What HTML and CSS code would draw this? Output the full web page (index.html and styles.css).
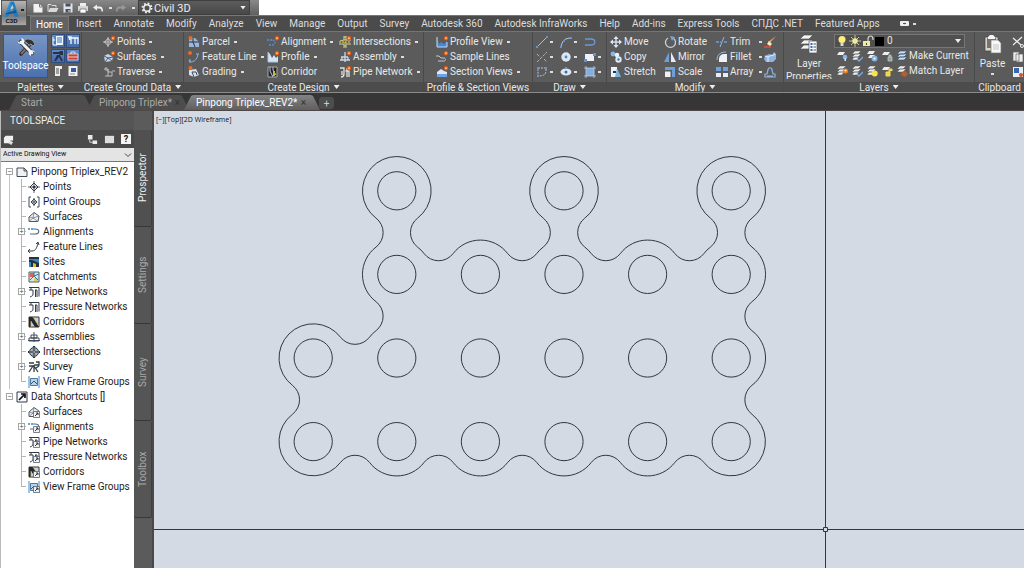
FILE: index.html
```html
<!DOCTYPE html>
<html lang="en">
<head>
<meta charset="utf-8">
<title>Civil 3D - Pinpong Triplex_REV2</title>
<link rel="stylesheet" href="styles.css">
</head>
<body>
<svg class="sprite" aria-hidden="true">
  <defs>
    <linearGradient id="logo-blue" x1="0" y1="0" x2="1" y2="1"><stop offset="0" stop-color="#4fb4ea"/><stop offset="1" stop-color="#0c5ea8"/></linearGradient>
    <g id="spark"><circle cx="10" cy="2.2" r="2.2" fill="#e8581c"/><circle cx="10" cy="2.2" r="1" fill="#ffc56b"/></g>
    <symbol id="new" viewBox="0 0 12 12"><path d="M1.500 2h6l3 3v5.500h-9z" fill="#f2f2f2"/><path d="M7.500 2v3h3" fill="none" stroke="#777"/></symbol>
    <symbol id="open" viewBox="0 0 12 12"><path d="M1 9.500v-7h3l1 1h4v2" fill="none" stroke="#ddd"/><path d="M1 10l2-4h8.500l-2 4z" fill="#d8d8d8"/></symbol>
    <symbol id="save" viewBox="0 0 12 12"><path d="M1.500 1.500h9v9h-9z" fill="#dfe3e8"/><path d="M3.500 1.500h5v3h-5zM3.500 7h5v3.500h-5z" fill="#47515f"/><path d="M6.500 8h1v2h-1z" fill="#eee"/></symbol>
    <symbol id="print" viewBox="0 0 12 12"><path d="M3 1h6v3H3z" fill="#eee"/><path d="M1 4h10v5H1z" fill="#d5d5d5"/><path d="M3 7h6v4H3z" fill="#fff" stroke="#666" stroke-width=".7"/></symbol>
    <symbol id="undo" viewBox="0 0 12 12"><path d="M1 5.500l4-3v2h3c2 0 3 1.500 3 5h-1.500c0-2-.5-3-2-3H5v2z" fill="currentColor"/></symbol>
    <symbol id="gear" viewBox="0 0 12 12"><circle cx="6" cy="6" r="4.500" fill="none" stroke="#eee" stroke-width="2" stroke-dasharray="1.800 1.730"/><circle cx="6" cy="6" r="3.200" fill="none" stroke="#eee" stroke-width="1.400"/></symbol>
    <symbol id="tools" viewBox="0 0 20 20"><path d="M5 17L15 6" stroke="#2a211e" stroke-width="3.400" stroke-linecap="round"/><path d="M5 17L15 6" stroke="#9a6a58" stroke-width="2"/><path d="M8 4c3-3 7-2 9 0l2 3-2 2-2-2-2 1-2-2z" fill="#333" stroke="#9aa" stroke-width=".8"/><path d="M5 5l11 11" stroke="#1c2432" stroke-width="4.500" stroke-linecap="round"/><path d="M5 5l11 11" stroke="#f1f1f1" stroke-width="3" stroke-linecap="round"/><path d="M1.500 4.500A4 4 0 0 0 8 6 4 4 0 0 0 5.500 1v3L4 5.500zM19 15.500a4 4 0 0 0-6-1.500 4 4 0 0 0 2 5v-3l1.500-1.500z" fill="#f4f4f4"/></symbol>
    <symbol id="pal1" viewBox="0 0 12 12"><path d="M4 1h7v9H4z" fill="#eef4fb"/><path d="M5 3h5M5 5h5M5 7h5" stroke="#3777c4"/><path d="M1 2v8h4M1 5h2" stroke="#fff" fill="none"/></symbol>
    <symbol id="pal2" viewBox="0 0 12 12"><path d="M1 2h3v7M4 3h4v6M8 3h3v6M2.500 2v3" stroke="#f4f7fc" fill="none" stroke-width="1.300"/></symbol>
    <symbol id="pal3" viewBox="0 0 12 12"><path d="M1 2h6l1-1h3v4H8L7 4H1zM5 5h3l3 6H9L7 7l-3 4H2z" fill="#283246"/></symbol>
    <symbol id="pal4" viewBox="0 0 12 12"><path d="M4 4V2h4v2" stroke="#ddd" fill="none"/><path d="M1 4h10v6H1z" fill="#c9413a" stroke="#eee" stroke-width=".7"/><path d="M1 7h10" stroke="#f2d7d2"/></symbol>
    <symbol id="pal5" viewBox="0 0 12 12"><path d="M3 1h7v3H8v7H3z" fill="#ececec"/><path d="M4 4h3M4 6h3M4 8h3" stroke="#555"/></symbol>
    <symbol id="pal6" viewBox="0 0 12 12"><path d="M1.500 1h9v10h-9z" fill="#f1f1f1"/><path d="M4 3h5v4H4z" fill="#325ea8"/><path d="M3 9h5" stroke="#888"/></symbol>
    <symbol id="points" viewBox="0 0 12 12"><path d="M5 2.500L8.500 6 5 9.500 1.500 6z" fill="none" stroke="#ddd"/><path d="M5 1v10M0 6h10" stroke="#ddd" stroke-width=".8"/><use href="#spark"/></symbol>
    <symbol id="surfaces" viewBox="0 0 12 12"><path d="M1 5l4-2 5 3-1 4-7 1z" fill="#c5d6ea"/><path d="M1 5l4 2 5-1M5 7l-3 4M5 7l4 3" fill="none" stroke="#49576b"/><use href="#spark"/></symbol>
    <symbol id="traverse" viewBox="0 0 12 12"><path d="M1 3h4v3h4v4H5V3M3 1v4M9 5h3M5 10H2" fill="none" stroke="#bdbdbd"/></symbol>
    <symbol id="parcel" viewBox="0 0 12 12"><path d="M1 2h6l4 4v5H1z" fill="#9cb6d8"/><path d="M1 6h4V2M5 6l2 5M5 6h6" fill="none" stroke="#26344b"/><circle cx="2.500" cy="2" r="2" fill="#ea6a25"/></symbol>
    <symbol id="feature" viewBox="0 0 12 12"><path d="M1 9l1 2c4 0 7-2 8-8M8 3h3M2 8v4" fill="none" stroke="#8fb1d8"/><circle cx="2" cy="2" r="2" fill="#ea6a25"/></symbol>
    <symbol id="grading" viewBox="0 0 12 12"><path d="M1 4l7-1 3 6-5 2-5-2z" fill="#d9e0e9"/><path d="M4 6l4 0 1 3M4 6l2 5" fill="none" stroke="#3c4c60"/><circle cx="2.500" cy="2" r="2" fill="#ea6a25"/></symbol>
    <symbol id="alignment" viewBox="0 0 12 12"><path d="M0 4h5M2 9h3c4 0 4-5 0-5" fill="none" stroke="#5a91d0" stroke-width="1.300" stroke-dasharray="2 1"/><use href="#spark"/></symbol>
    <symbol id="profile" viewBox="0 0 12 12"><path d="M1 1v10h10V5L9 7 7 4 5 7 3 3z" fill="#d6e3f3"/><path d="M1 1v10h10" fill="none" stroke="#a8c2e2"/><use href="#spark"/></symbol>
    <symbol id="profview" viewBox="0 0 12 12"><path d="M1 1v10h10V5L8 8 5 6 3 8z" fill="#4b88d2"/><path d="M1 1v10h10V6" fill="none" stroke="#bfd8f5"/><use href="#spark"/></symbol>
    <symbol id="corridor" viewBox="0 0 12 12"><path d="M1 1h9v10H1z" fill="#24262a" stroke="#a9a9a9"/><path d="M3 1v4l3 6M6 1v3l3 5" fill="none" stroke="#b5c4dc"/><path d="M7 5v5" stroke="#d9b43a" stroke-width="2"/></symbol>
    <symbol id="intersect" viewBox="0 0 12 12"><path d="M5 0v4L1 5M7 0v4h5M5 12V8H0M7 12V8h5" fill="none" stroke="#cfd0a2"/><path d="M6 0v12M0 6h12" stroke="#e5da3c" stroke-dasharray="2 1"/><use href="#spark"/></symbol>
    <symbol id="assembly" viewBox="0 0 12 12"><path d="M6 1v10M1 9h10M2 6h7M3 6v3M9 6v3" fill="none" stroke="#c8d8ed" stroke-width="1.300"/><use href="#spark"/></symbol>
    <symbol id="pipe" viewBox="0 0 12 12"><path d="M1 2h4v6c0 2-1 3-3 3M3 5v4M8 2v9M6.500 5h4M10 5v6" fill="none" stroke="#e1e1e1" stroke-width="1.300"/><use href="#spark"/></symbol>
    <symbol id="sample" viewBox="0 0 12 12"><path d="M0 5h3l2 2h3M2 10h6c2 0 2-3 0-3" fill="none" stroke="#c4cad2"/><use href="#spark"/></symbol>
    <symbol id="section" viewBox="0 0 12 12"><path d="M1 6l4-3 3 2 3 1v5H1z" fill="#dce8f7"/><path d="M1 8h10v3H1z" fill="#6fa3e0"/><use href="#spark"/></symbol>
    <symbol id="line" viewBox="0 0 12 12"><path d="M1 11L11 1" stroke="#b6bcc6"/><path d="M0 10h2v2H0zM10 0h2v2h-2z" fill="#5d93d8"/></symbol>
    <symbol id="arc" viewBox="0 0 12 12"><path d="M1 11C2 5 5 2 11 2" fill="none" stroke="#c2cad4"/><path d="M0 10h2v2H0zM3 4h2v2H3zM10 1h2v2h-2z" fill="#5d93d8"/></symbol>
    <symbol id="pline" viewBox="0 0 12 12"><path d="M1 3h6c5 0 5 6 0 6H1" fill="none" stroke="#6c9bd4" stroke-width="1.300"/></symbol>
    <symbol id="xline" viewBox="0 0 12 12"><path d="M1 11L11 1M1 3l3 3M8 8l3 3" stroke="#a8b3c2" stroke-dasharray="3 1"/></symbol>
    <symbol id="circle" viewBox="0 0 12 12"><circle cx="6" cy="6" r="4.700" fill="#dde6f1"/><circle cx="6" cy="6" r="1.400" fill="#4c86ce"/></symbol>
    <symbol id="rect" viewBox="0 0 12 12"><path d="M1 3h9v7H1z" fill="#eef1f5"/><path d="M9 2h3v3H9zM0 8h3v3H0z" fill="#5b93da"/></symbol>
    <symbol id="curve" viewBox="0 0 12 12"><path d="M2 2h8v3c0 4-3 5-8 5z" fill="none" stroke="#b9c3d0" stroke-dasharray="2 1"/><path d="M1 1h2v2H1zM9 1h2v2H9zM1 9h2v2H1z" fill="#6794cd"/></symbol>
    <symbol id="ellipse" viewBox="0 0 12 12"><ellipse cx="6" cy="6" rx="5.500" ry="3.500" fill="#dfe7f1"/><circle cx="6" cy="6" r="1.500" fill="#3e6fae"/><path d="M5 1h2v2H5z" fill="#5d93d8"/></symbol>
    <symbol id="hatch" viewBox="0 0 12 12"><path d="M2 2h8v8H2z" fill="#86ade0"/><path d="M2 0v12M10 0v12M0 2h12M0 10h12" stroke="#b9d0ee" stroke-width=".8"/></symbol>
    <symbol id="move" viewBox="0 0 12 12"><path d="M6 0l2.500 3h-5zM6 12L3.500 9h5zM0 6l3-2.500v5zM12 6L9 3.500v5z" fill="#e9eef5"/><path d="M6 2v8M2 6h8" stroke="#cfdbea" stroke-width="1.500"/></symbol>
    <symbol id="copy" viewBox="0 0 12 12"><circle cx="3" cy="3" r="2.400" fill="#8ab5ea"/><circle cx="7" cy="4" r="2.300" fill="#edf1f6"/><circle cx="8.500" cy="8.500" r="3.200" fill="#e3e9f1"/><circle cx="8.500" cy="8.500" r="1.200" fill="#4a7cb8"/></symbol>
    <symbol id="stretch" viewBox="0 0 12 12"><path d="M1 1h6v10H1z" fill="#eef3fa"/><path d="M7 2l4 9H5z" fill="#79b3dd"/><path d="M3 6h3" stroke="#253246" stroke-width="2"/></symbol>
    <symbol id="rotate" viewBox="0 0 12 12"><path d="M4 2a5 5 0 1 0 5 0" fill="none" stroke="#cbd1d9" stroke-width="1.300"/><path d="M6 0l5 1-3 4z" fill="#74a5e0"/></symbol>
    <symbol id="mirror" viewBox="0 0 12 12"><path d="M5 1v10H0z" fill="#6f9fd8"/><path d="M7 1v10h5z" fill="#e4ebf4"/></symbol>
    <symbol id="scale" viewBox="0 0 12 12"><path d="M1 1h10v10H8V4H1z" fill="#6e9edb"/><path d="M1 5.500h5.500V11H1z" fill="#edf2f8"/></symbol>
    <symbol id="trim" viewBox="0 0 12 12"><path d="M0 6h5M8 6h4" stroke="#6b9edb" stroke-width="1.500" stroke-dasharray="3 1"/><path d="M4 11L8 1" stroke="#9fb4ce"/></symbol>
    <symbol id="fillet" viewBox="0 0 12 12"><path d="M3 11V8c0-3 2-5 6-5h2v8z" fill="#eff1f4"/><path d="M1 9c0-5 3-8 9-8" fill="none" stroke="#95bce9"/></symbol>
    <symbol id="array" viewBox="0 0 12 12"><path d="M0 1h5v4H0zM7 1h5v4H7z" fill="#6f9fdc"/><path d="M0 7h5v4H0zM7 7h5v4H7z" fill="#e7edf5"/></symbol>
    <symbol id="erase" viewBox="0 0 12 12"><path d="M12 0L6 7 4 6z" fill="#f2a038"/><path d="M5 5l3 3-2 2-3-2z" fill="#f4e9d2"/><path d="M0 11h7" stroke="#ea4d2e" stroke-width="1.500"/></symbol>
    <symbol id="explode" viewBox="0 0 12 12"><path d="M1 5l4-2 3 1 2-3 2 2v5l-3 3H2L0 8z" fill="#8bb4e4"/><path d="M1 5l3 1 4-2M4 6v5M8 5l3-2" fill="none" stroke="#e4edf8"/></symbol>
    <symbol id="offset" viewBox="0 0 12 12"><path d="M1 11V8h2l1-4c0-3 4-3 4 0l1 4h2v3zM3 10h6" fill="none" stroke="#8fb4e1" stroke-width="1.200"/></symbol>
    <symbol id="layerprops" viewBox="0 0 20 20"><path d="M5 1h9l-4 4H1zM5 6h9l-4 4H1zM5 11h7l-2 4H1z" fill="#f3f3f3" stroke="#555" stroke-width=".7"/><path d="M10 7h8v12h-8z" fill="#f6f7f9" stroke="#555" stroke-width=".7"/><path d="M11.500 9h2v2h-2zM11.500 12h2v2h-2zM11.500 15h2v2h-2z" fill="#356fb8"/><path d="M14.500 10h2.500M14.500 13h2.500M14.500 16h2.500" stroke="#555"/></symbol>
    <symbol id="bulb" viewBox="0 0 12 12"><circle cx="6" cy="4.500" r="3.500" fill="#ffef76"/><path d="M4.500 7.500h3V11h-3z" fill="#d8d8d0"/></symbol>
    <symbol id="sun" viewBox="0 0 12 12"><circle cx="6" cy="6" r="2.700" fill="#fff3a1"/><path d="M6 0v12M0 6h12M2 2l8 8M10 2l-8 8" stroke="#e9e6a0" stroke-width=".8"/></symbol>
    <symbol id="unlock" viewBox="0 0 12 12"><path d="M6 6V4c0-4 5-4 5 0v1" fill="none" stroke="#d8d8c8" stroke-width="1.200"/><path d="M1 6h7v5H1z" fill="#f1e8a2"/><path d="M4 8h1v2H4z" fill="#4b4730"/></symbol>
    <symbol id="lay-a" viewBox="0 0 12 12"><path d="M3 2h6L7 5H1z" fill="#f0f0f0"/><circle cx="9" cy="7" r="2.300" fill="#8cb7e8"/><path d="M8.500 8h1.500v3H8.500z" fill="#d9e5f3"/></symbol>
    <symbol id="lay-b" viewBox="0 0 12 12"><path d="M4 1h6L7 4H1zM4 4h6L7 7H1zM3 7h5l-2 3H1z" fill="#eee" stroke="#555" stroke-width=".5"/><path d="M6 9l2 2 4-4" stroke="#78a9e2" fill="none" stroke-width="1.400"/></symbol>
    <symbol id="lay-c" viewBox="0 0 12 12"><path d="M3 1h6L7 4H1zM4 5h5L7 8H2z" fill="#eee"/><circle cx="8.500" cy="8.500" r="3" fill="#84b2e6"/><circle cx="8.500" cy="8.500" r="1" fill="#fff"/></symbol>
    <symbol id="lay-d" viewBox="0 0 12 12"><path d="M3 2h6L7 5H1z" fill="#eee"/><path d="M7 7h4v4H7zM8 7V5h2v2" fill="#8ba39c" stroke="#c8d1ce" stroke-width=".7"/></symbol>
    <symbol id="lay-e" viewBox="0 0 12 12"><path d="M4 1h7L8 4H1zM4 4h7L8 7H1zM4 7h7l-3 3H1z" fill="#cfe0f5" stroke="#3d5470" stroke-width=".7"/></symbol>
    <symbol id="lay-f" viewBox="0 0 12 12"><path d="M4 1h6L7 4H1zM4 4h6L7 7H1zM3 7h5l-2 3H1z" fill="#eee" stroke="#555" stroke-width=".5"/><circle cx="9.500" cy="6" r="2.500" fill="#f07d28"/><circle cx="9.500" cy="5.500" r="1" fill="#fff19a"/></symbol>
    <symbol id="lay-g" viewBox="0 0 12 12"><path d="M4 1h6L7 4H1zM4 4h6L7 7H1zM3 7h5l-2 3H1z" fill="#eee" stroke="#555" stroke-width=".5"/><circle cx="8.700" cy="8.500" r="3" fill="#ffe14c"/></symbol>
    <symbol id="lay-h" viewBox="0 0 12 12"><path d="M3 2h6L7 5H1z" fill="#eee"/><path d="M5 7h4v4H5zM8 7V4h3v2" fill="#f0d43c" stroke="#f2dc5e"/></symbol>
    <symbol id="lay-i" viewBox="0 0 12 12"><path d="M4 1h6L7 4H1zM4 4h6L7 7H1z" fill="#eee" stroke="#555" stroke-width=".5"/><path d="M6 7l3-1 3 3-3 3-4-2z" fill="#b85f28"/></symbol>
    <symbol id="paste" viewBox="0 0 20 20"><path d="M2 3h13v14H2z" fill="#d8d4c7" stroke="#444" stroke-width=".7"/><path d="M4 4h9v10H4z" fill="#77736a"/><path d="M5 3l2-2h3l2 2v2H5z" fill="#f5f5f5"/><path d="M8 6h7l3 3v10H8z" fill="#f8f8f8" stroke="#777" stroke-width=".7"/><path d="M10 11h6M10 13h6M10 15h6" stroke="#c2c2c2"/></symbol>
    <symbol id="cut" viewBox="0 0 12 12"><path d="M1 2l8 7M1 9l9-8" stroke="#eee" stroke-width="1.200"/><circle cx="10" cy="10" r="1.500" fill="none" stroke="#eee"/></symbol>
    <symbol id="copyclip" viewBox="0 0 12 12"><path d="M1 1h6v9H1zM4 3h7v8H4z" fill="#eee" stroke="#666" stroke-width=".7"/></symbol>
    <symbol id="pastespec" viewBox="0 0 12 12"><path d="M1 1h10v10H1z" fill="#e8eef7"/><path d="M2 2h5v5H2z" fill="#3868ad"/><circle cx="9" cy="9" r="2" fill="#d8522d"/></symbol>
    <symbol id="t-doc" viewBox="0 0 12 12"><path d="M1 2h7l3 3v5.500H1z" fill="#eff1f4" stroke="#454b55"/><path d="M8 2v3h3" fill="none" stroke="#454b55"/></symbol>
    <symbol id="t-points" viewBox="0 0 12 12"><path d="M6 2l4 4-4 4-4-4z" fill="none" stroke="#333b47"/><path d="M6 0v12M0 6h12" stroke="#333b47" stroke-width=".8"/><circle cx="6" cy="6" r="1.500" fill="#333b47"/></symbol>
    <symbol id="t-groups" viewBox="0 0 12 12"><path d="M3 1H1v10h2M9 1h2v10H9" fill="none" stroke="#404956"/><path d="M6 3l3 3-3 3-3-3zM6 2v8M3 6h6" fill="none" stroke="#404956"/></symbol>
    <symbol id="t-surf" viewBox="0 0 12 12"><path d="M1 6l5-4.500L11 5l-1 5.500H1z" fill="#eef0f2" stroke="#4d5661"/><path d="M1 6l4 1 6-2M6 1.500L5 7l-4 3.500M5 7l5 3.500" fill="none" stroke="#697482" stroke-width=".7"/></symbol>
    <symbol id="t-align" viewBox="0 0 12 12"><path d="M0 3h5" stroke="#2c8dc9" stroke-width="1.500" stroke-dasharray="2 1"/><path d="M5 3h2c5 0 5 5 0 5H2" fill="none" stroke="#5b6c80" stroke-width="1.200"/></symbol>
    <symbol id="t-feature" viewBox="0 0 12 12"><path d="M1 10h3c4 0 5-4 6-8M8 3l2-2 1 3M2 8l-2 2 2 2" fill="none" stroke="#343d49"/></symbol>
    <symbol id="t-sites" viewBox="0 0 12 12"><path d="M1 1h10v10H1z" fill="#3188bd"/><path d="M1 1h10v2H1z" fill="#26313e"/><path d="M1 4h3l7 3v4H8V8L5 7v4H3V6H1z" fill="#26313e"/><path d="M5 7l3 1v3H5z" fill="#dcb73c"/></symbol>
    <symbol id="t-catch" viewBox="0 0 12 12"><path d="M1 1h10v10H1z" fill="#d5e7ed" stroke="#4f5a63"/><path d="M2 2h4v4H2z" fill="#d96551"/><path d="M6 7h4v3H6z" fill="#e4c659"/><path d="M2 9l4-4 4 4M6 1v4l5-2" fill="none" stroke="#287b9c"/></symbol>
    <symbol id="t-pipe" viewBox="0 0 12 12"><path d="M1 1.500h10v9M1 4h4v4c0 2-1 2-3 3M7.500 4v7M3 1.500V4M7 4h2v7" fill="none" stroke="#323b48"/></symbol>
    <symbol id="t-corr" viewBox="0 0 12 12"><path d="M1 1h10v10H1z" fill="#cfd2d5" stroke="#333"/><path d="M1 1h4l6 10H7L3 5v6H1z" fill="#24292f"/><path d="M3 5v6M5 1l6 9" stroke="#d9b752" stroke-width=".7"/></symbol>
    <symbol id="t-asm" viewBox="0 0 12 12"><path d="M6 1v10M0 9.500h12M3 4h6v3H3zM1 7h10v3H1z" fill="none" stroke="#414b58"/></symbol>
    <symbol id="t-inter" viewBox="0 0 12 12"><circle cx="6" cy="6" r="4.500" fill="#aab5bc" stroke="#27333e"/><path d="M6 0v12M0 6h12" stroke="#26313b" stroke-width="2.200"/><path d="M6 1v10M1 6h10" stroke="#dfe4e6" stroke-width=".6"/></symbol>
    <symbol id="t-survey" viewBox="0 0 12 12"><path d="M1 2h5M8 1h3v3H7l-2 1H1M5 5l-4 6M6 5l4 6M6 5v6M8 7l3-2" fill="none" stroke="#343d47" stroke-width="1.300"/></symbol>
    <symbol id="t-frames" viewBox="0 0 12 12"><path d="M1 0v12M11 0v12" stroke="#3c89cc"/><path d="M2.500 2.500h7v7h-7z" fill="#b4d4ea" stroke="#527998"/><path d="M3 8l3-3 3 3" fill="none" stroke="#3c5973"/></symbol>
    <symbol id="t-short" viewBox="0 0 12 12"><path d="M1 1h10v10H1z" fill="#f7f8f9" stroke="#333b47"/><path d="M3 9l5-5M5 3h4v4" fill="none" stroke="#111" stroke-width="1.700"/></symbol>
    <symbol id="t-link" viewBox="0 0 12 12"><path d="M5.500 5.500h6v6h-6z" fill="#eef1f4" stroke="#59636f" stroke-width=".8"/><path d="M7 10l3-3M8 7h2v2" fill="none" stroke="#333"/></symbol>
  </defs>
</svg>

<div class="app">
  <header class="top">
    <button class="app-menu" aria-label="Application menu">
      <svg class="app-logo" viewBox="0 0 20 20"><path d="M1 18.500L8 1h5L6 18.500z" fill="url(#logo-blue)"/><path d="M9 1h4l5.500 17.500h-5z" fill="#1f7cc0"/><path d="M3 14.500l12-4 1 3.500-12 2z" fill="#0d5a9c"/><path d="M8.500 10l2.500-5.500 1.500 4z" fill="#c8d2da"/></svg>
      <span class="app-tag">C3D</span><span class="caret app-caret"></span>
    </button>
    <div class="top-main">
      <div class="qat">
        <button aria-label="New"><svg class="ico"><use href="#new"/></svg></button>
        <button aria-label="Open"><svg class="ico"><use href="#open"/></svg></button>
        <button aria-label="Save"><svg class="ico"><use href="#save"/></svg></button>
        <button aria-label="Print"><svg class="ico"><use href="#print"/></svg></button>
        <button class="drop" aria-label="Undo"><svg class="ico"><use href="#undo"/></svg><span class="caret"></span></button>
        <button class="drop redo" aria-label="Redo"><svg class="ico flip"><use href="#undo"/></svg><span class="caret"></span></button>
        <div class="workspace"><svg class="ico"><use href="#gear"/></svg><select aria-label="Workspace"><option>Civil 3D</option></select><span class="caret wide"></span></div>
        <button class="more" aria-label="Customize"><span class="caret wide"></span></button>
      </div>
      <nav class="tabs">
        <button class="tab on">Home</button><button class="tab">Insert</button><button class="tab">Annotate</button><button class="tab">Modify</button><button class="tab">Analyze</button><button class="tab">View</button><button class="tab">Manage</button><button class="tab">Output</button><button class="tab">Survey</button><button class="tab">Autodesk 360</button><button class="tab">Autodesk InfraWorks</button><button class="tab">Help</button><button class="tab">Add-ins</button><button class="tab">Express Tools</button><button class="tab">СПДС .NET</button><button class="tab">Featured Apps</button>
        <button class="tab last" aria-label="Ribbon display"><span class="pill"></span><span class="caret"></span></button>
      </nav>
    </div>
  </header>

  <div class="ribbon">
    <section class="panel palettes">
      <div class="body">
        <button class="toolspace"><svg class="big"><use href="#tools"/></svg>Toolspace</button>
        <div class="toggles">
          <button class="on" aria-label="Prospector"><svg class="ico"><use href="#pal1"/></svg></button><button class="on" aria-label="Settings"><svg class="ico"><use href="#pal2"/></svg></button>
          <button class="on" aria-label="Survey"><svg class="ico"><use href="#pal3"/></svg></button><button class="on" aria-label="Toolbox"><svg class="ico"><use href="#pal4"/></svg></button>
          <button aria-label="Properties"><svg class="ico"><use href="#pal5"/></svg></button><button aria-label="Tool palettes"><svg class="ico"><use href="#pal6"/></svg></button>
        </div>
      </div>
      <h2>Palettes<span class="caret wide"></span></h2>
    </section>
    <section class="panel ground">
      <div class="body"><div class="col">
        <button class="cmd"><svg class="ico"><use href="#points"/></svg>Points<span class="caret"></span></button>
        <button class="cmd"><svg class="ico"><use href="#surfaces"/></svg>Surfaces<span class="caret"></span></button>
        <button class="cmd"><svg class="ico"><use href="#traverse"/></svg>Traverse<span class="caret"></span></button>
      </div></div>
      <h2>Create Ground Data<span class="caret wide"></span></h2>
    </section>
    <section class="panel design">
      <div class="body">
        <div class="col">
          <button class="cmd"><svg class="ico"><use href="#parcel"/></svg>Parcel<span class="caret"></span></button>
          <button class="cmd"><svg class="ico"><use href="#feature"/></svg>Feature Line<span class="caret"></span></button>
          <button class="cmd"><svg class="ico"><use href="#grading"/></svg>Grading<span class="caret"></span></button>
        </div>
        <div class="col">
          <button class="cmd"><svg class="ico"><use href="#alignment"/></svg>Alignment<span class="caret"></span></button>
          <button class="cmd"><svg class="ico"><use href="#profile"/></svg>Profile<span class="caret"></span></button>
          <button class="cmd"><svg class="ico"><use href="#corridor"/></svg>Corridor</button>
        </div>
        <div class="col">
          <button class="cmd"><svg class="ico"><use href="#intersect"/></svg>Intersections<span class="caret"></span></button>
          <button class="cmd"><svg class="ico"><use href="#assembly"/></svg>Assembly<span class="caret"></span></button>
          <button class="cmd"><svg class="ico"><use href="#pipe"/></svg>Pipe Network<span class="caret"></span></button>
        </div>
      </div>
      <h2>Create Design<span class="caret wide"></span></h2>
    </section>
    <section class="panel views">
      <div class="body"><div class="col">
        <button class="cmd"><svg class="ico"><use href="#profview"/></svg>Profile View<span class="caret"></span></button>
        <button class="cmd"><svg class="ico"><use href="#sample"/></svg>Sample Lines</button>
        <button class="cmd"><svg class="ico"><use href="#section"/></svg>Section Views<span class="caret"></span></button>
      </div></div>
      <h2>Profile &amp; Section Views</h2>
    </section>
    <section class="panel draw">
      <div class="body">
        <button class="cmd" aria-label="Line"><svg class="ico"><use href="#line"/></svg><span class="caret"></span></button><button class="cmd" aria-label="Arc"><svg class="ico"><use href="#arc"/></svg><span class="caret"></span></button><button class="cmd" aria-label="Polyline"><svg class="ico"><use href="#pline"/></svg></button>
        <button class="cmd" aria-label="Construction line"><svg class="ico"><use href="#xline"/></svg><span class="caret"></span></button><button class="cmd" aria-label="Circle"><svg class="ico"><use href="#circle"/></svg><span class="caret"></span></button><button class="cmd" aria-label="Rectangle"><svg class="ico"><use href="#rect"/></svg><span class="caret"></span></button>
        <button class="cmd" aria-label="Curve"><svg class="ico"><use href="#curve"/></svg><span class="caret"></span></button><button class="cmd" aria-label="Ellipse"><svg class="ico"><use href="#ellipse"/></svg><span class="caret"></span></button><button class="cmd" aria-label="Hatch"><svg class="ico"><use href="#hatch"/></svg><span class="caret"></span></button>
      </div>
      <h2>Draw<span class="caret wide"></span></h2>
    </section>
    <section class="panel modify">
      <div class="body">
        <div class="col"><button class="cmd"><svg class="ico"><use href="#move"/></svg>Move</button><button class="cmd"><svg class="ico"><use href="#copy"/></svg>Copy</button><button class="cmd"><svg class="ico"><use href="#stretch"/></svg>Stretch</button></div>
        <div class="col"><button class="cmd"><svg class="ico"><use href="#rotate"/></svg>Rotate</button><button class="cmd"><svg class="ico"><use href="#mirror"/></svg>Mirror</button><button class="cmd"><svg class="ico"><use href="#scale"/></svg>Scale</button></div>
        <div class="col spread"><button class="cmd"><svg class="ico"><use href="#trim"/></svg>Trim<span class="caret"></span></button><button class="cmd"><svg class="ico"><use href="#fillet"/></svg>Fillet<span class="caret"></span></button><button class="cmd"><svg class="ico"><use href="#array"/></svg>Array<span class="caret"></span></button></div>
        <div class="col"><button class="cmd" aria-label="Erase"><svg class="ico"><use href="#erase"/></svg></button><button class="cmd" aria-label="Explode"><svg class="ico"><use href="#explode"/></svg></button><button class="cmd" aria-label="Offset"><svg class="ico"><use href="#offset"/></svg></button></div>
      </div>
      <h2>Modify<span class="caret wide"></span></h2>
    </section>
    <section class="panel layers">
      <div class="body">
        <button class="large"><svg class="big"><use href="#layerprops"/></svg><span>Layer<br>Properties</span></button>
        <div class="layer-tools">
          <div class="layer-pick"><svg class="ico"><use href="#bulb"/></svg><svg class="ico"><use href="#sun"/></svg><svg class="ico"><use href="#unlock"/></svg><span class="swatch"></span><select aria-label="Layer"><option>0</option></select><span class="caret wide"></span></div>
          <div class="layer-row"><button aria-label="Layer off"><svg class="ico"><use href="#lay-a"/></svg></button><button aria-label="Isolate"><svg class="ico"><use href="#lay-b"/></svg></button><button aria-label="Freeze"><svg class="ico"><use href="#lay-c"/></svg></button><button aria-label="Lock"><svg class="ico"><use href="#lay-d"/></svg></button><button class="cmd"><svg class="ico"><use href="#lay-e"/></svg>Make Current</button></div>
          <div class="layer-row"><button aria-label="All layers on"><svg class="ico"><use href="#lay-f"/></svg></button><button aria-label="Unisolate"><svg class="ico"><use href="#lay-b"/></svg></button><button aria-label="Thaw all"><svg class="ico"><use href="#lay-g"/></svg></button><button aria-label="Unlock"><svg class="ico"><use href="#lay-h"/></svg></button><button class="cmd"><svg class="ico"><use href="#lay-i"/></svg>Match Layer</button></div>
        </div>
      </div>
      <h2>Layers<span class="caret wide"></span></h2>
    </section>
    <section class="panel clip">
      <div class="body">
        <button class="large"><svg class="big"><use href="#paste"/></svg><span>Paste</span><span class="caret"></span></button>
        <div class="col"><button class="cmd" aria-label="Cut"><svg class="ico"><use href="#cut"/></svg></button><button class="cmd" aria-label="Copy clip"><svg class="ico"><use href="#copyclip"/></svg></button><button class="cmd" aria-label="Paste special"><svg class="ico"><use href="#pastespec"/></svg></button></div>
      </div>
      <h2>Clipboard</h2>
    </section>
  </div>

  <nav class="docs">
    <button class="doc first"><span>Start</span></button>
    <button class="doc second"><span>Pinpong Triplex*</span><span class="x">×</span></button>
    <button class="doc on"><span>Pinpong Triplex_REV2*</span><span class="x">×</span></button>
    <button class="doc plus" aria-label="New drawing"><span>+</span></button>
  </nav>

  <main class="work">
    <aside class="space">
      <h1>TOOLSPACE</h1>
      <div class="space-bar">
        <button aria-label="Refresh"><svg class="tool" viewBox="0 0 12 12"><path d="M3 2h8v5H8l-1 3H1V4z" fill="#f1f1f1"/><path d="M6 10l2-3 3 2-2 3z" fill="#ddd"/></svg></button>
        <button class="push" aria-label="Item view"><svg class="tool" viewBox="0 0 12 12"><path d="M1 1h5v5H1zM6 7h5v4H6z" fill="#e9e9e9"/><path d="M3 6v3h3" fill="none" stroke="#ddd"/></svg></button>
        <button aria-label="Preview"><svg class="tool" viewBox="0 0 12 12"><path d="M1 2h10v8H1z" fill="#ddd"/></svg></button>
        <button class="help" aria-label="Help">?</button>
      </div>
      <div class="view-pick"><select aria-label="View"><option>Active Drawing View</option></select><svg class="chev" viewBox="0 0 8 8"><path d="M1 2.500l3 3 3-3" fill="none" stroke="#444"/></svg></div>
      <ul class="tree">
        <li><div class="row"><span class="box">−</span><svg class="ico"><use href="#t-doc"/></svg>Pinpong Triplex_REV2</div>
          <ul>
            <li><div class="row"><svg class="ico"><use href="#t-points"/></svg>Points</div></li>
            <li><div class="row"><svg class="ico"><use href="#t-groups"/></svg>Point Groups</div></li>
            <li><div class="row"><svg class="ico"><use href="#t-surf"/></svg>Surfaces</div></li>
            <li><div class="row"><span class="box">+</span><svg class="ico"><use href="#t-align"/></svg>Alignments</div></li>
            <li><div class="row"><svg class="ico"><use href="#t-feature"/></svg>Feature Lines</div></li>
            <li><div class="row"><svg class="ico"><use href="#t-sites"/></svg>Sites</div></li>
            <li><div class="row"><svg class="ico"><use href="#t-catch"/></svg>Catchments</div></li>
            <li><div class="row"><span class="box">+</span><svg class="ico"><use href="#t-pipe"/></svg>Pipe Networks</div></li>
            <li><div class="row"><svg class="ico"><use href="#t-pipe"/></svg>Pressure Networks</div></li>
            <li><div class="row"><svg class="ico"><use href="#t-corr"/></svg>Corridors</div></li>
            <li><div class="row"><span class="box">+</span><svg class="ico"><use href="#t-asm"/></svg>Assemblies</div></li>
            <li><div class="row"><svg class="ico"><use href="#t-inter"/></svg>Intersections</div></li>
            <li><div class="row"><span class="box">+</span><svg class="ico"><use href="#t-survey"/></svg>Survey</div></li>
            <li><div class="row"><svg class="ico"><use href="#t-frames"/></svg>View Frame Groups</div></li>
          </ul>
        </li>
        <li><div class="row"><span class="box">−</span><svg class="ico"><use href="#t-short"/></svg>Data Shortcuts []</div>
          <ul>
            <li><div class="row"><svg class="ico"><use href="#t-surf"/><use href="#t-link"/></svg>Surfaces</div></li>
            <li><div class="row"><span class="box">+</span><svg class="ico"><use href="#t-align"/><use href="#t-link"/></svg>Alignments</div></li>
            <li><div class="row"><svg class="ico"><use href="#t-pipe"/><use href="#t-link"/></svg>Pipe Networks</div></li>
            <li><div class="row"><svg class="ico"><use href="#t-pipe"/><use href="#t-link"/></svg>Pressure Networks</div></li>
            <li><div class="row"><svg class="ico"><use href="#t-corr"/><use href="#t-link"/></svg>Corridors</div></li>
            <li><div class="row"><svg class="ico"><use href="#t-frames"/><use href="#t-link"/></svg>View Frame Groups</div></li>
          </ul>
        </li>
      </ul>
    </aside>
    <nav class="side"><button class="on">Prospector</button><button>Settings</button><button>Survey</button><button>Toolbox</button></nav>
    <div class="canvas">
      <svg class="drawing" viewBox="154 111 870 457" role="img" aria-label="Plate outline with holes">
        <g fill="none" stroke="#33373d">
          <path d="M376 218.100a34.300 34.300 0 1 1 41.600 0a18.300 18.300 0 0 0 0 29a34.300 34.300 0 0 1 6.500 6.500a18.300 18.300 0 0 0 29 0a34.300 34.300 0 0 1 54.600 0a18.300 18.300 0 0 0 29 0a34.300 34.300 0 0 1 6.500 -6.500a18.300 18.300 0 0 0 0 -29a34.300 34.300 0 1 1 41.600 0a18.300 18.300 0 0 0 0 29a34.300 34.300 0 0 1 6.500 6.500a18.300 18.300 0 0 0 29 0a34.300 34.300 0 0 1 54.600 0a18.300 18.300 0 0 0 29 0a34.300 34.300 0 0 1 6.500 -6.500a18.300 18.300 0 0 0 0 -29a34.300 34.300 0 1 1 41.600 0a18.300 18.300 0 0 0 0 29a34.300 34.300 0 0 1 0 54.600a18.300 18.300 0 0 0 0 29a34.300 34.300 0 0 1 0 54.600a18.300 18.300 0 0 0 0 29a34.300 34.300 0 1 1 -48.100 48.100a18.300 18.300 0 0 0 -29 0a34.300 34.300 0 0 1 -54.600 0a18.300 18.300 0 0 0 -29 0a34.300 34.300 0 0 1 -54.600 0a18.300 18.300 0 0 0 -29 0a34.300 34.300 0 0 1 -54.600 0a18.300 18.300 0 0 0 -29 0a34.300 34.300 0 0 1 -54.600 0a18.300 18.300 0 0 0 -29 0a34.300 34.300 0 1 1 -48.100 -48.100a18.300 18.300 0 0 0 0 -29a34.300 34.300 0 1 1 48.100 -48.100a18.300 18.300 0 0 0 29 0a34.300 34.300 0 0 1 6.500 -6.500a18.300 18.300 0 0 0 0 -29a34.300 34.300 0 0 1 0 -54.600a18.300 18.300 0 0 0 0 -29z"/>
          <circle cx="396.800" cy="190.800" r="19.100"/><circle cx="564" cy="190.800" r="19.100"/><circle cx="731.200" cy="190.800" r="19.100"/>
          <circle cx="396.800" cy="274.400" r="19.100"/><circle cx="480.400" cy="274.400" r="19.100"/><circle cx="564" cy="274.400" r="19.100"/><circle cx="647.600" cy="274.400" r="19.100"/><circle cx="731.200" cy="274.400" r="19.100"/>
          <circle cx="313.200" cy="358" r="19.100"/><circle cx="396.800" cy="358" r="19.100"/><circle cx="480.400" cy="358" r="19.100"/><circle cx="564" cy="358" r="19.100"/><circle cx="647.600" cy="358" r="19.100"/><circle cx="731.200" cy="358" r="19.100"/>
          <circle cx="313.200" cy="441.600" r="19.100"/><circle cx="396.800" cy="441.600" r="19.100"/><circle cx="480.400" cy="441.600" r="19.100"/><circle cx="564" cy="441.600" r="19.100"/><circle cx="647.600" cy="441.600" r="19.100"/><circle cx="731.200" cy="441.600" r="19.100"/>
          <path d="M825.500 -2000V527.500M825.500 531.500V3000M-2000 529.500H823.500M827.500 529.500H4000M823.500 527.500h4v4h-4z"/>
        </g>
      </svg>
      <div class="viewport-menu">[−][Top][2D Wireframe]</div>
    </div>
  </main>
</div>
</body>
</html>
```
FILE: styles.css
```css
* { box-sizing: border-box; }
body { margin: 0; font: 10px/15px Roboto, "Open Sans", sans-serif; color: #e8e8e8; background: #fff; }
button, select { font: inherit; color: inherit; background: none; border: 0; padding: 0; margin: 0; appearance: none; white-space: nowrap; }
h1, h2, ul { margin: 0; padding: 0; font-size: 10px; font-weight: 400; list-style: none; }
.sprite { position: absolute; width: 0; height: 0; }
.app { display: flex; flex-direction: column; min-height: 100vh; overflow: hidden; }
.ico { width: 12px; height: 12px; flex: none; display: block; }
.big { width: 20px; height: 20px; flex: none; display: block; }
.caret { flex: none; width: 3px; height: 2px; background: #ddd; }
.caret.wide { width: 6px; height: 4px; background: #eee; clip-path: polygon(0 0, 100% 0, 50% 100%); }

.top { display: flex; height: 31px; background: linear-gradient(#fff 15px, #4b4b4b 15px); }
.app-menu { flex: none; display: grid; grid-template-columns: 19px 4px; grid-template-rows: 17px 7px; align-items: center; width: 26px; height: 26px; margin-left: 1px; border: 1px solid #555; background: linear-gradient(#b5b5b5, #787878 60%, #a8a8a8); }
.app-logo { display: block; width: 19px; height: 17px; }
.app-tag { grid-row: 2; font: bold 6px/7px "Liberation Sans", sans-serif; color: #111; text-align: center; }
.app-caret { grid-row: 1; grid-column: 2; background: #222; }
.top-main { flex: 1; min-width: 0; }
.qat { display: flex; align-items: center; gap: 3px; width: 232px; height: 15px; padding-left: 5px; background: linear-gradient(#888, #606060); color: #eee; }
.qat .drop { display: flex; align-items: center; gap: 5px; width: 20px; }
.qat .redo { color: #999; }
.flip { transform: scaleX(-1); }
.workspace { display: flex; align-items: center; flex: 1; height: 15px; padding: 0 3px 0 2px; background: linear-gradient(#5c5c5c, #484848); border: 1px solid #3f3f3f; overflow: hidden; }
.workspace select { flex: 1; height: 15px; padding: 3px 0 0 1px; font-size: 11px; line-height: 12px; }
.more { padding: 0 3px; height: 15px; }
.tabs { display: flex; height: 16px; padding-left: 3px; background: #4b4b4b; border-top: 1px solid #777; }
.tab { display: flex; align-items: center; gap: 4px; padding: 0 6px; height: 15px; line-height: 15px; color: #ddd; flex: none; }
.tab.on { padding: 0 5px; background: #626262; border: 1px solid #777; border-bottom: 0; color: #fff; margin-right: 1px; }
.tab.last { margin-left: 8px; }
.tab .pill { width: 9px; height: 5px; border-radius: 1px; background: radial-gradient(#555 1px, #eee 2px); }

.ribbon { display: grid; grid-template-columns: 82px 102px 240px 109px 74px 177px 191px 1fr; height: 62px; background: #5b5b5b; border-top: 1px solid #747474; border-bottom: 1px solid #8a8a8a; overflow: hidden; }
.panel { min-width: 0; border-right: 1px solid #494949; overflow: hidden; }
.panel .body { display: flex; height: 50px; padding-top: 2px; overflow: hidden; }
.panel h2 { display: flex; justify-content: center; gap: 4px; height: 11px; line-height: 12px; background: #4c4c4c; white-space: nowrap; }
.panel h2 .caret { margin-top: 3px; }
.cmd { display: flex; align-items: center; gap: 2px; height: 15px; line-height: 15px; }
.cmd .caret { margin-left: 2px; }
.large { display: flex; flex-direction: column; align-items: center; gap: 3px; height: 45px; line-height: 13px; overflow: hidden; }
.toolspace { width: 45px; height: 44px; margin-left: 3px; padding-top: 2px; display: flex; flex-direction: column; align-items: center; gap: 1px; background: linear-gradient(#7896c4, #4a70b0); border: 1px solid #36558c; color: #fff; }
.toggles { display: grid; grid-template-columns: 14px 14px; grid-auto-rows: 14px; gap: 1px; margin-left: 3px; }
.toggles button { display: grid; place-items: center; }
.toggles .on { background: linear-gradient(#5f8acb, #456aa6); border: 1px solid #2f4c80; }
.ground .body { padding-left: 21px; }
.design .body { display: grid; grid-template-columns: 79px 72px auto; padding-left: 4px; }
.views .body { padding-left: 12px; }
.draw .body { display: grid; grid-template-columns: 24px 24px 20px; grid-auto-rows: 15px; padding-left: 3px; }
.draw .cmd { gap: 0; }
.modify .body { display: grid; grid-template-columns: 52px 50px 46px auto; column-gap: 1px; padding-left: 3px; }
.spread .cmd { width: 46px; }
.spread .caret { margin-left: auto; }
.modify .body { column-gap: 2px; }
.layers .large { width: 50px; }
.layer-tools { width: 138px; }
.layer-pick { display: flex; align-items: center; gap: 1px; width: 131px; height: 14px; padding: 0 3px 0 1px; background: #505050; border: 1px solid #777; }
.layer-pick select { flex: 1; padding-left: 2px; height: 14px; line-height: 14px; }
.swatch { width: 9px; height: 9px; background: #000; }
.layer-row { display: flex; align-items: center; gap: 3px; height: 15px; padding-left: 2px; }
.layer-row .cmd { gap: 1px; }
.clip { border-right: 0; }
.clip .large { width: 37px; }
.clip .body { gap: 2px; }

.docs { display: flex; height: 18px; padding: 2px 0 0 9px; background: #363636; border-bottom: 1px solid #4d4747; }
.doc { display: flex; align-items: center; justify-content: space-between; height: 15px; line-height: 15px; padding: 0 9px 0 12px; margin-right: -5px; color: #aaa; background: #4d4d4d; clip-path: polygon(0 100%, 7px 1px, 9px 0, calc(100% - 9px) 0, calc(100% - 7px) 1px, 100% 100%); }
.doc.first { width: 83px; }
.doc.second { width: 102px; }
.doc.on { width: 136px; padding-right: 14px; background: linear-gradient(#838383, #5f5f5f); color: #fff; }
.doc.plus { width: 15px; height: 12px; padding: 0; margin: 2px 0 0 4px; justify-content: center; border-radius: 3px; color: #ccc; clip-path: none; }
.x { color: #333; }

.work { display: flex; flex: 1; min-height: 0; }
.space { width: 134px; flex: none; background: #fff; color: #1d1d1d; border-left: 1px solid #bbb; }
.space h1 { height: 19px; padding-left: 9px; line-height: 19px; background: #555; color: #eee; }
.space-bar { display: flex; align-items: center; gap: 6px; height: 18px; padding: 0 3px 0 2px; background: #4a4a4a; }
.tool { width: 11px; height: 11px; display: block; }
.push { margin-left: auto; }
.help { width: 10px; height: 10px; background: #f4f4f4; color: #111; font-weight: 700; font-size: 9px; line-height: 10px; text-align: center; }
.view-pick { display: flex; align-items: center; height: 14px; padding: 0 2px; margin-bottom: 2px; background: #e4e4e4; border-bottom: 1px solid #777; }
.view-pick select { flex: 1; font-size: 7px; line-height: 13px; color: #111; }
.chev { width: 8px; height: 8px; }
.row { display: flex; align-items: center; gap: 3px; height: 15px; line-height: 15px; white-space: nowrap; }
.tree { padding-left: 6px; }
.tree > li > .row { padding-left: 9px; }
.tree > li { position: relative; }
.tree ul { margin-left: 14px; }
.tree ul li { position: relative; padding-left: 7px; }
.tree ul li::before { content: ""; position: absolute; left: 0; top: 7px; width: 5px; border-top: 1px solid #b5b5b5; }
.tree ul li::after { content: ""; position: absolute; left: 0; top: 0; bottom: 0; border-left: 1px solid #b5b5b5; }
.tree ul li:last-child::after { bottom: 7px; }
.tree > li:first-child::before { content: ""; position: absolute; left: 2px; top: 8px; bottom: 0; border-left: 1px solid #c4c4c4; }
.box { position: absolute; z-index: 1; left: -1px; top: 4px; width: 7px; height: 7px; border: 1px solid #a5a5a5; background: #fff; color: #345; font: 7px/5px "Liberation Sans", sans-serif; text-align: center; }
.tree ul .box { left: -3px; }
.side { width: 20px; flex: none; display: flex; flex-direction: column; padding-top: 19px; background: #5b5b5b; border-right: 2px solid #494949; }
.side button { height: 97px; writing-mode: vertical-rl; transform: rotate(180deg); line-height: 17px; text-align: center; color: #a9a9a9; background: #555; border-top: 1px solid #373737; border-left: 1px solid #3f3f3f; border-radius: 2px; }
.side .on { color: #eee; background: #505050; }
.canvas { position: relative; flex: 1; min-width: 0; background: #d4dae3; overflow: hidden; }
.drawing { display: block; width: 100%; height: auto; overflow: visible; }
.viewport-menu { position: absolute; left: 2px; top: 2px; font: 7px/14px "Open Sans", sans-serif; color: #111; }
```
